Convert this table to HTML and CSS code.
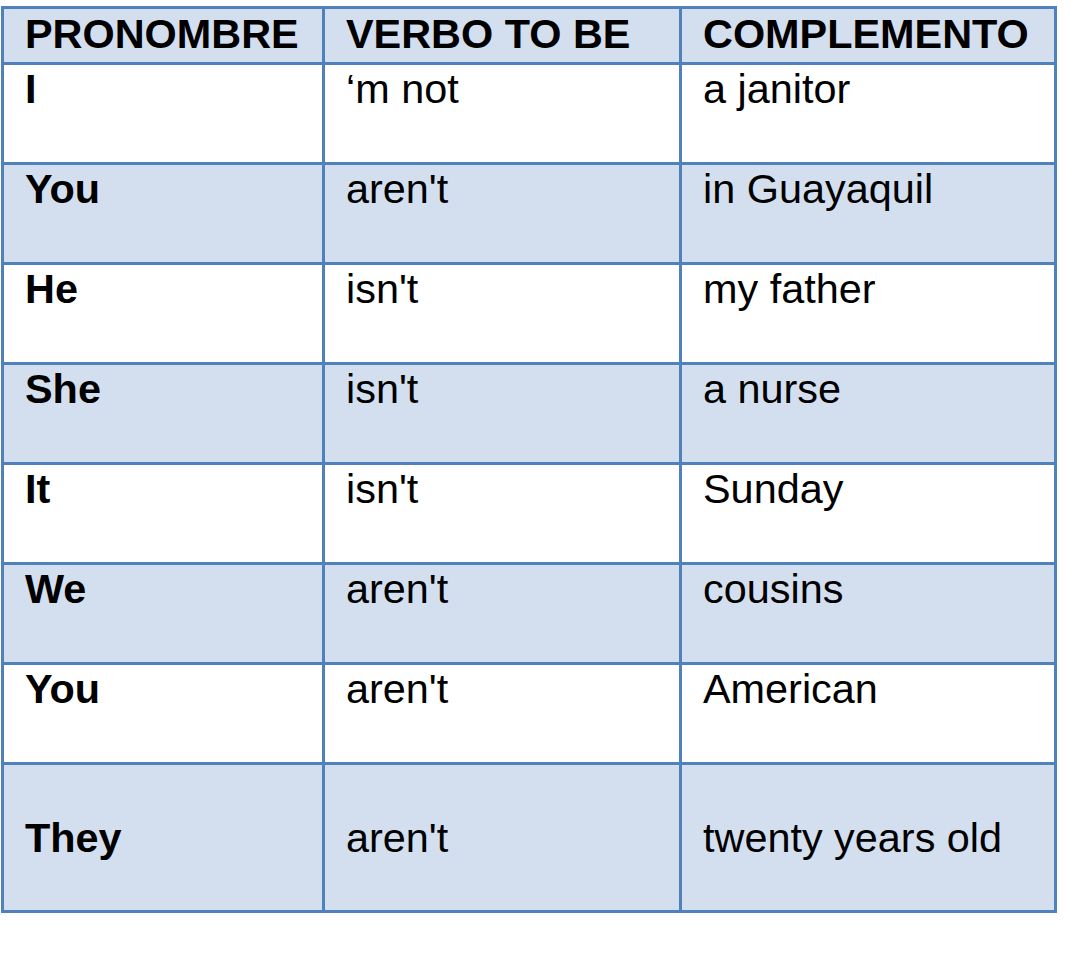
FILE: index.html
```html
<!DOCTYPE html>
<html lang="es">
<head>
<meta charset="utf-8">
<title>Verbo to be - negativo</title>
<link rel="stylesheet" href="styles.css">
</head>
<body>
<table class="grammar">
  <colgroup>
    <col class="c1">
    <col class="c2">
    <col class="c3">
  </colgroup>
  <thead>
    <tr class="head">
      <th>PRONOMBRE</th>
      <th>VERBO TO BE</th>
      <th>COMPLEMENTO</th>
    </tr>
  </thead>
  <tbody>
    <tr class="row"><td class="pron">I</td><td>‘m not</td><td>a janitor</td></tr>
    <tr class="row alt"><td class="pron">You</td><td>aren't</td><td>in Guayaquil</td></tr>
    <tr class="row"><td class="pron">He</td><td>isn't</td><td>my father</td></tr>
    <tr class="row alt"><td class="pron">She</td><td>isn't</td><td>a nurse</td></tr>
    <tr class="row"><td class="pron">It</td><td>isn't</td><td>Sunday</td></tr>
    <tr class="row alt"><td class="pron">We</td><td>aren't</td><td>cousins</td></tr>
    <tr class="row"><td class="pron">You</td><td>aren't</td><td>American</td></tr>
    <tr class="row alt last"><td class="pron">They</td><td>aren't</td><td>twenty years old</td></tr>
  </tbody>
</table>
</body>
</html>
```

FILE: styles.css
```css
html, body {
  background: #ffffff;
}
body {
  margin: 0;
  padding: 6px 0 0 1px;
  font-family: "Liberation Sans", Arial, sans-serif;
  color: #000;
}
.grammar {
  border-collapse: collapse;
  table-layout: fixed;
  width: 1053px;
  font-size: 41.4px;
  line-height: 46px;
}
.c1 { width: 321px; }
.c2 { width: 357px; }
.c3 { width: 375px; }
.grammar th,
.grammar td {
  border: 3.5px solid #4f81bd;
  padding: 1px 2px 0 21px;
  text-align: left;
  vertical-align: top;
  white-space: nowrap;
  overflow: hidden;
}
.head {
  height: 56px;
  background: #d3dfee;
}
.head th {
  font-weight: bold;
  padding-top: 2px;
}
.row {
  height: 100px;
  background: #ffffff;
}
.row.alt {
  background: #d3dfee;
}
.row.last {
  height: 148px;
}
.row.last td {
  vertical-align: middle;
  padding-top: 0;
}
.pron {
  font-weight: bold;
}
```
